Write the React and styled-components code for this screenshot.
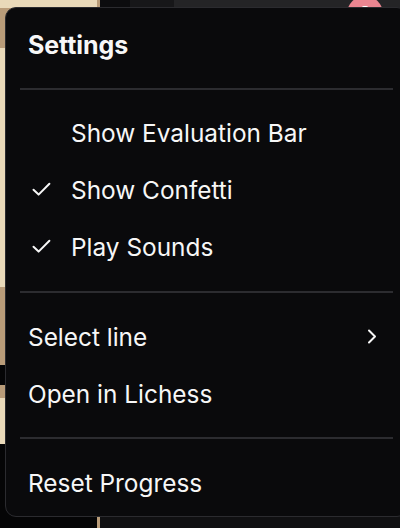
import React from 'react'
import styled, { createGlobalStyle } from 'styled-components'

const GlobalStyle = createGlobalStyle`
  html, body {
    margin: 0;
    padding: 0;
    background: #0c0c0e;
  }
  body {
    font-family: Inter, "Noto Sans", "Liberation Sans", sans-serif;
    -webkit-font-smoothing: antialiased;
  }
`

const Stage = styled.div`
  position: relative;
  width: 400px;
  height: 528px;
  overflow: hidden;
  display: flex;
`

const Board = styled.div`
  width: 100px;
  display: flex;
  flex-direction: column;
  border-right: 3px solid #b99c79;
  box-sizing: border-box;
`

const Square = styled.div`
  height: ${p => p.h}px;
  background: ${p => p.c};
`

const Side = styled.div`
  flex: 1;
  display: flex;
  flex-direction: column;
`

const TopBar = styled.div`
  height: 8px;
  display: flex;
`

const Strip = styled.div`
  width: ${p => p.w}px;
  flex: ${p => (p.w ? 'none' : 1)};
  background: ${p => p.c};
  position: relative;
`

const Avatar = styled.div`
  position: absolute;
  left: 173px;
  top: -4px;
  width: 36px;
  height: 36px;
  border-radius: 50%;
  background: radial-gradient(circle at 50% 55%, #fff 0 35%, #ea8590 37%);
`

const Filler = styled.div`
  flex: 1;
  background: #101012;
`

const Menu = styled.div`
  position: absolute;
  left: 5px;
  top: 7px;
  width: 403px;
  height: 510px;
  box-sizing: border-box;
  overflow: hidden;
  background: #0a0a0c;
  border: 1px solid #2b2b2f;
  border-radius: 11px;
  color: #f7f7f7;
  display: flex;
  flex-direction: column;
`

const Header = styled.div`
  height: 80px;
  box-sizing: border-box;
  flex: none;
  padding: 0 0 7px 22px;
  display: flex;
  align-items: center;
  font-size: 25px;
  font-weight: 700;
  letter-spacing: -0.1px;
`

const Divider = styled.div`
  height: 2px;
  flex: none;
  margin: 0 14px;
  background: #2c2c30;
`

const Section = styled.div`
  padding: ${p => p.pt}px 0 ${p => p.pb}px;
  display: flex;
  flex-direction: column;
  flex: none;
`

const Item = styled.div`
  height: 57px;
  padding: 0 30px 0 22px;
  display: flex;
  align-items: center;
  font-size: 24.4px;
  font-weight: 400;
`

const CheckSlot = styled.span`
  width: 39px;
  margin-left: 4px;
  display: flex;
  align-items: center;
`

const Label = styled.span`
  flex: 1;
`

const Check = () => (
  <svg width="19" height="15" viewBox="0 0 19 15" fill="none">
    <path d="M1.5 7.8 L6.6 12.6 L17.4 1.8" stroke="#f7f7f7" strokeWidth="2" strokeLinecap="round" strokeLinejoin="round" />
  </svg>
)

const Chevron = () => (
  <svg width="10" height="15" viewBox="0 0 10 15" fill="none">
    <path d="M2 1.5 L8 7.5 L2 13.5" stroke="#f7f7f7" strokeWidth="2" strokeLinecap="round" strokeLinejoin="round" />
  </svg>
)

const boardSquares = [
  [8, '#e9d9b9'],
  [40, '#b99c79'],
  [239, '#e9d9b9'],
  [78, '#b99c79'],
  [20, '#050506'],
  [13, '#b99c79'],
  [46, '#e9d9b9'],
  [84, '#050506'],
]

export default function App() {
  return (
    <>
      <GlobalStyle />
      <Stage>
        <Board>
          {boardSquares.map(([h, c], i) => (
            <Square key={i} h={h} c={c} />
          ))}
        </Board>
        <Side>
          <TopBar>
            <Strip w={30} c="#0c0c0e" />
            <Strip w={44} c="#171719" />
            <Strip c="#242426">
              <Avatar />
            </Strip>
          </TopBar>
          <Filler />
        </Side>

        <Menu>
          <Header>Settings</Header>
          <Divider />
          <Section pt={14} pb={16}>
            <Item>
              <CheckSlot />
              <Label>Show Evaluation Bar</Label>
            </Item>
            <Item>
              <CheckSlot><Check /></CheckSlot>
              <Label>Show Confetti</Label>
            </Item>
            <Item>
              <CheckSlot><Check /></CheckSlot>
              <Label>Play Sounds</Label>
            </Item>
          </Section>
          <Divider />
          <Section pt={15} pb={15}>
            <Item>
              <Label>Select line</Label>
              <Chevron />
            </Item>
            <Item>
              <Label>Open in Lichess</Label>
            </Item>
          </Section>
          <Divider />
          <Section pt={15} pb={0}>
            <Item>
              <Label>Reset Progress</Label>
            </Item>
          </Section>
        </Menu>
      </Stage>
    </>
  )
}
